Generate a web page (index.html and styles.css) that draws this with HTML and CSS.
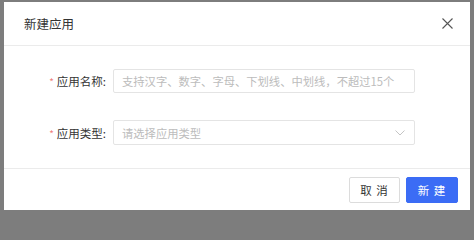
FILE: index.html
```html
<!DOCTYPE html>
<html lang="zh">
<head>
<meta charset="utf-8">
<link rel="stylesheet" href="styles.css">
</head>
<body>
<div class="dialog">
  <div class="header">
    <span class="title">新建应用</span>
    <span class="close">
      <svg width="11" height="11" viewBox="0 0 11 11"><path d="M0.5 0.5 L10.5 10.5 M10.5 0.5 L0.5 10.5" stroke="#555" stroke-width="1.1" fill="none"/></svg>
    </span>
  </div>
  <div class="body">
    <div class="row">
      <label class="label"><span class="req">*</span>应用名称:</label>
      <div class="input"><span class="ph">支持汉字、数字、字母、下划线、中划线，不超过15个</span></div>
    </div>
    <div class="row">
      <label class="label"><span class="req">*</span>应用类型:</label>
      <div class="input select"><span class="ph">请选择应用类型</span>
        <svg class="chev" width="10" height="6" viewBox="0 0 10 6"><path d="M0.5 0.5 L5 5 L9.5 0.5" stroke="#c4c4c4" stroke-width="1" fill="none"/></svg>
      </div>
    </div>
  </div>
  <div class="footer">
    <button class="btn">取 消</button>
    <button class="btn primary">新 建</button>
  </div>
</div>
</body>
</html>
```
FILE: styles.css
```css
html, body { margin: 0; padding: 0; }
body {
  background: #7d7d7d;
  width: 474px;
  height: 215px;
  overflow: hidden;
  font-family: "Noto Sans CJK SC", "Noto Sans", sans-serif;
}
.dialog {
  margin: 2px 0 0 4px;
  width: 466px;
  height: 208px;
  background: #fff;
  display: flex;
  flex-direction: column;
}
.header {
  height: 43px;
  border-bottom: 1px solid #ebebeb;
  display: flex;
  align-items: center;
  justify-content: space-between;
  padding: 0 17px 0 20px;
}
.title {
  font-size: 12.5px;
  color: #333;
}
.close { display: flex; }
.body {
  flex: 1;
  padding-top: 23px;
  display: flex;
  flex-direction: column;
  gap: 27px;
}
.row {
  display: grid;
  grid-template-columns: 102px 302px;
  column-gap: 7px;
  align-items: center;
}
.label {
  text-align: right;
  font-size: 11.5px;
  color: #333;
}
.req {
  color: #f08080;
  font-size: 10px;
  margin-right: 3px;
}
.input {
  height: 24px;
  box-sizing: border-box;
  border: 1px solid #e4e4e4;
  border-radius: 2px;
  display: flex;
  align-items: center;
  padding: 0 8px;
  font-size: 11.3px;
}
.select { height: 25px; justify-content: space-between; padding-right: 9px; }
.ph { color: #bcbcbc; white-space: nowrap; }
.footer {
  border-top: 1px solid #ebebeb;
  height: 41px;
  display: flex;
  justify-content: flex-end;
  align-items: center;
  gap: 6px;
  padding-right: 12px;
}
.btn {
  height: 26px;
  width: 51px;
  font-family: inherit;
  font-size: 11.5px;
  border: 1px solid #dcdcdc;
  background: #fff;
  color: #333;
  border-radius: 2px;
  padding: 0;
  letter-spacing: 1px;
}
.primary {
  width: 52px;
  background: #3b6cf5;
  border-color: #3b6cf5;
  color: #fff;
}
```
